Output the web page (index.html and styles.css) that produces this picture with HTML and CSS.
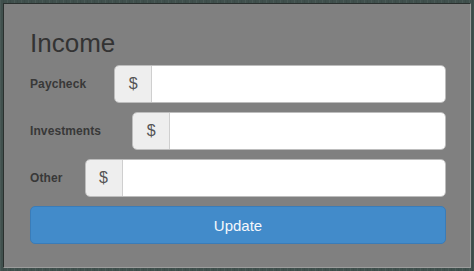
FILE: index.html
```html
<!DOCTYPE html>
<html>
<head>
<meta charset="utf-8">
<link rel="stylesheet" href="styles.css">
</head>
<body>
<div class="panel">
  <h1 class="title">Income</h1>
  <div class="row row-paycheck">
    <label class="label">Paycheck</label>
    <div class="group"><span class="addon">$</span><span class="field"></span></div>
  </div>
  <div class="row row-invest">
    <label class="label">Investments</label>
    <div class="group"><span class="addon">$</span><span class="field"></span></div>
  </div>
  <div class="row row-other">
    <label class="label">Other</label>
    <div class="group"><span class="addon">$</span><span class="field"></span></div>
  </div>
  <button class="btn">Update</button>
</div>
</body>
</html>
```
FILE: styles.css
```css
html, body { margin: 0; height: 100%; }
body {
  padding: 3px;
  box-sizing: border-box;
  background-color: #40504d;
  background-image: repeating-linear-gradient(90deg, rgba(255,255,255,0.05) 0 1px, transparent 1px 3px, rgba(0,0,0,0.06) 3px 4px, transparent 4px 7px);
  font-family: "Liberation Sans", Arial, sans-serif;
}
.panel {
  box-sizing: border-box;
  height: 265px;
  width: 468px;
  background: #808080;
  border: 1px solid;
  border-color: #2a302e #9c9c9c #9c9c9c #2a302e;
  padding: 24px 24px 0 26px;
  display: flex;
  flex-direction: column;
  gap: 9px;
}
.title {
  margin: 0 0 -2px 0;
  font-size: 26px;
  line-height: 30px;
  font-weight: normal;
  color: #333;
}
.row {
  display: flex;
  align-items: center;
  height: 38px;
}
.label {
  font-size: 12px;
  font-weight: bold;
  color: #383838;
  letter-spacing: 0.1px;
}
.row-paycheck .label { margin-right: 28px; }
.row-invest .label { margin-right: 31px; }
.row-other .label { margin-right: 22px; }
.group {
  flex: 1;
  display: flex;
  height: 100%;
  border-radius: 5px;
  overflow: hidden;
  border: 1px solid #bdbdbd;
  box-sizing: border-box;
}
.addon {
  width: 36px;
  background: #eeeeee;
  border-right: 1px solid #cfcfcf;
  color: #555;
  font-size: 16px;
  display: flex;
  align-items: center;
  justify-content: center;
}
.field { flex: 1; background: #fff; }
.btn {
  height: 38px;
  border: 1px solid #3a7cb8;
  border-radius: 5px;
  background: #428bca;
  color: #f4f8fc;
  font-family: "Liberation Sans", Arial, sans-serif;
  font-size: 15px;
  padding: 0;
}
```
